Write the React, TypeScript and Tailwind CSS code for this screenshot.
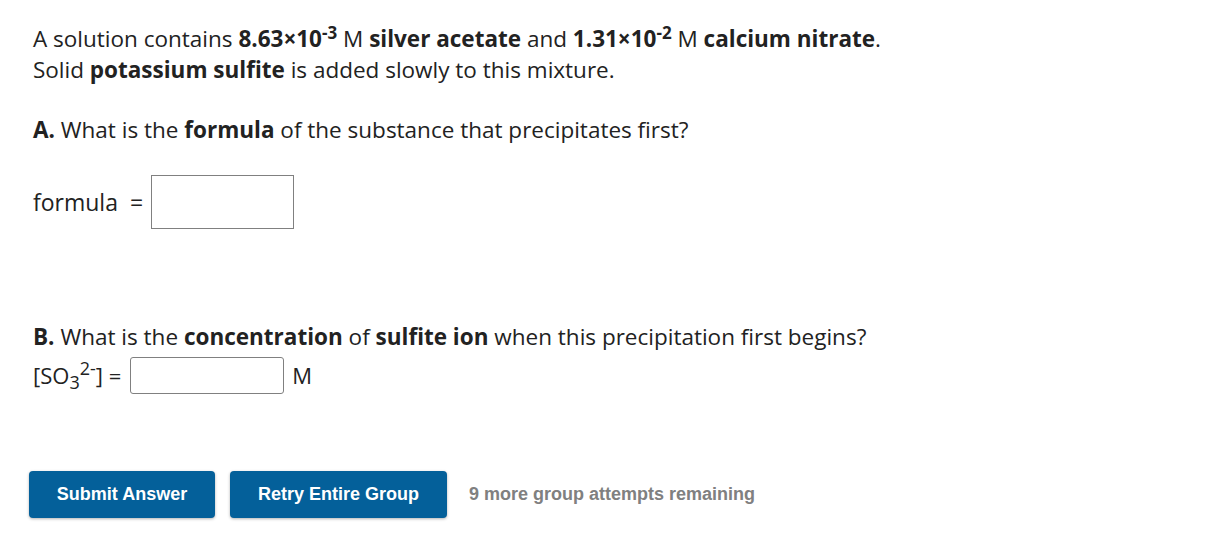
export default function App() {
  return (
    <div className="min-h-screen bg-white pl-[33px] pt-[23px] text-[#222] [font-family:'Open_Sans',sans-serif]">
      <p className="text-[22.5px] leading-[31px]">
        A solution contains <b>8.63×10<sup className="text-[17px]">-3</sup></b> M <b>silver acetate</b> and{" "}
        <b>1.31×10<sup className="text-[17px]">-2</sup></b> M <b>calcium nitrate</b>.
        <br />
        Solid <b>potassium sulfite</b> is added slowly to this mixture.
      </p>

      <p className="mt-[29px] text-[22.5px] leading-[31px]">
        <b>A.</b> What is the <b>formula</b> of the substance that precipitates first?
      </p>

      <div className="mt-[30px] flex items-center">
        <span className="text-[23px]">formula&nbsp;&nbsp;=</span>
        <input className="ml-[8px] h-[54px] w-[143px] border border-[#808080] outline-none" />
      </div>

      <p className="mt-[92px] text-[22.5px] leading-[31px]">
        <b>B.</b> What is the <b>concentration</b> of <b>sulfite ion</b> when this precipitation first begins?
      </p>

      <div className="mt-[5px] flex items-center">
        <span className="text-[22px] font-medium">
          [SO<sub className="text-[18px]">3</sub>
          <sup className="text-[18px]">2-</sup>] =
        </span>
        <input className="ml-[9px] h-[37px] w-[154px] rounded-[3px] border border-[#808080] outline-none" />
        <span className="ml-[8px] text-[22px]">M</span>
      </div>

      <div className="-ml-[4px] mt-[77px] flex items-center gap-[15px] [font-family:'Liberation_Sans',Arial,sans-serif]">
        <button className="h-[47px] w-[186px] rounded-[4px] bg-[#04609a] text-[18px] font-bold text-white shadow-[0_1px_3px_rgba(0,0,0,0.3)]">
          Submit Answer
        </button>
        <button className="h-[47px] w-[217px] rounded-[4px] bg-[#04609a] text-[18px] font-bold text-white shadow-[0_1px_3px_rgba(0,0,0,0.3)]">
          Retry Entire Group
        </button>
        <span className="ml-[7px] text-[18px] font-bold text-[#808080]">9 more group attempts remaining</span>
      </div>
    </div>
  );
}
